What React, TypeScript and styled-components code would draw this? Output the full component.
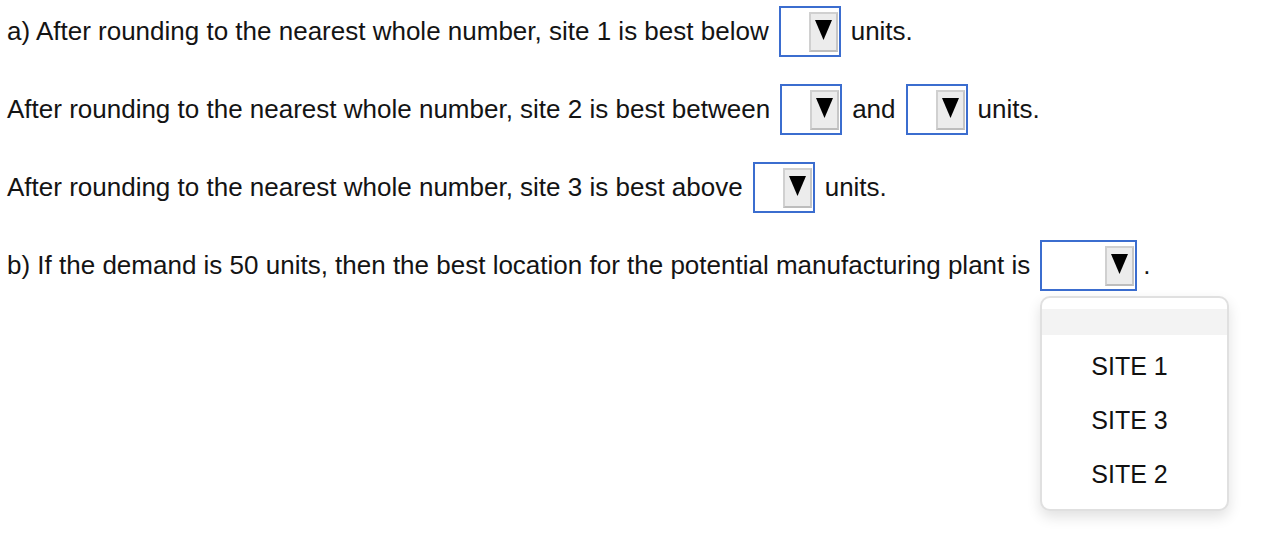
import styled, { createGlobalStyle } from "styled-components";

const GlobalStyle = createGlobalStyle`
  body {
    margin: 0;
    min-height: 100vh;
    background: #ffffff;
    font-family: "Liberation Sans", Arial, sans-serif;
    color: #141414;
  }
`;

const Page = styled.div`
  display: flex;
  flex-direction: column;
  gap: 27px;
  min-height: 556px;
  box-sizing: border-box;
  padding: 6px 0 0 7px;
  font-size: 26px;
`;

const Row = styled.div`
  display: flex;
  align-items: center;
  gap: 10px;
  white-space: nowrap;
`;

const Punct = styled.span`
  margin-left: -4px;
`;

const Holder = styled.div`
  position: relative;
`;

const SelectBox = styled.div<{ $wide?: boolean }>`
  box-sizing: border-box;
  width: ${(p) => (p.$wide ? "97px" : "62px")};
  height: 51px;
  border: 2px solid #3b6dcf;
  background: #fff;
  display: flex;
  align-items: center;
  justify-content: flex-end;
  padding-right: 1px;
`;

const Arrow = styled.div`
  box-sizing: border-box;
  width: 29px;
  height: 40px;
  background: #ececec;
  border: 2px solid #d0d0d0;
  border-bottom-color: #bdbdbd;
  border-right-color: #c6c6c6;
  display: flex;
  align-items: center;
  justify-content: center;
  padding-bottom: 4px;
  svg {
    display: block;
  }
`;

const Menu = styled.div`
  position: absolute;
  top: 56px;
  left: 0;
  box-sizing: border-box;
  width: 189px;
  height: 215px;
  background: #fff;
  border: 2px solid #e0e0e0;
  border-radius: 10px;
  box-shadow: 0 6px 14px rgba(0, 0, 0, 0.12);
  padding: 11px 0 8px 0;
  z-index: 5;
`;

const Blank = styled.div`
  height: 26px;
  background: #f3f3f3;
  margin-bottom: 4px;
`;

const MenuItem = styled.div`
  height: 54px;
  display: flex;
  align-items: center;
  padding-left: 49px;
  font-size: 25px;
  color: #111;
`;

function Select({ wide, options }: { wide?: boolean; options?: string[] }) {
  return (
    <Holder>
      <SelectBox $wide={wide}>
        <Arrow>
          <svg width="17" height="20" viewBox="0 0 17 20">
            <polygon points="0,0 17,0 8.5,20" fill="#000" />
          </svg>
        </Arrow>
      </SelectBox>
      {options && (
        <Menu>
          <Blank />
          {options.map((o) => (
            <MenuItem key={o}>{o}</MenuItem>
          ))}
        </Menu>
      )}
    </Holder>
  );
}

export default function App() {
  return (
    <>
      <GlobalStyle />
      <Page>
        <Row>
          <span>a) After rounding to the nearest whole number, site 1 is best below</span>
          <Select />
          <span>units.</span>
        </Row>
        <Row>
          <span>After rounding to the nearest whole number, site 2 is best between</span>
          <Select />
          <span>and</span>
          <Select />
          <span>units.</span>
        </Row>
        <Row>
          <span>After rounding to the nearest whole number, site 3 is best above</span>
          <Select />
          <span>units.</span>
        </Row>
        <Row>
          <span>b) If the demand is 50 units, then the best location for the potential manufacturing plant is</span>
          <Select wide options={["SITE 1", "SITE 3", "SITE 2"]} />
          <Punct>.</Punct>
        </Row>
      </Page>
    </>
  );
}
